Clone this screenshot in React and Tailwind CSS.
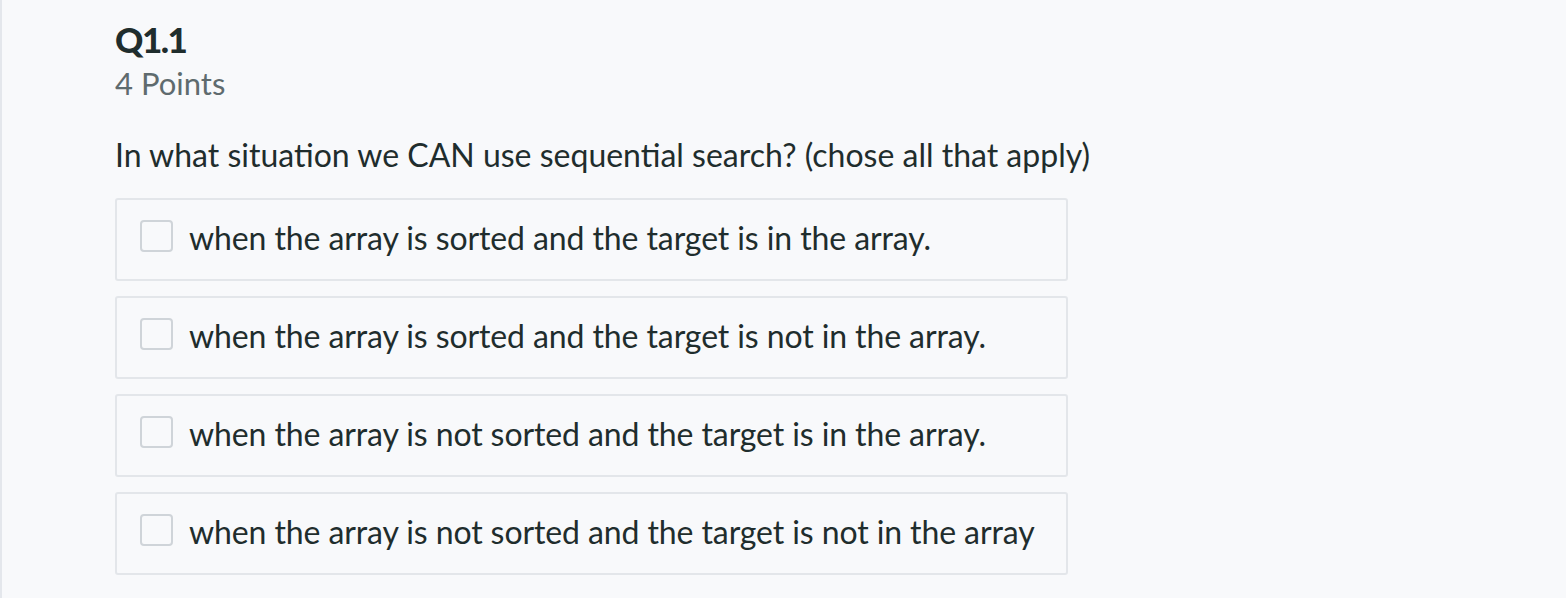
export default function App() {
  const options = [
    "when the array is sorted and the target is in the array.",
    "when the array is sorted and the target is not in the array.",
    "when the array is not sorted and the target is in the array.",
    "when the array is not sorted and the target is not in the array",
  ];
  return (
    <div className="w-[1566px] h-[598px] overflow-hidden bg-[#f8f9fb] border-l-2 border-[#e4e7ec]" style={{ fontFamily: "Lato, 'Open Sans', sans-serif" }}>
      <div className="pl-[113px] pt-[19px]">
        <div className="text-[35px] leading-[40px] font-black text-[#1f2d2d] tracking-[-1.5px]">Q1.1</div>
        <div className="text-[31px] leading-[36px] text-[#5f6b6e] mt-[6px]">4 Points</div>
        <div className="text-[32px] leading-[40px] text-[#1f2d2d] mt-[34px]">In what situation we CAN use sequential search? (chose all that apply)</div>
        <div className="flex flex-col gap-[15px] mt-[23px] w-[953px]">
          {options.map((o) => (
            <div key={o} className="h-[83px] border-2 border-[#e3e6ea] rounded-[3px] flex items-center pl-[23px] pb-[4px]">
              <div className="w-[33px] h-[32px] border-2 border-[#cfd4d9] rounded-[4px] bg-[#f8f9fb] shrink-0 mb-[4px]" />
              <div className="ml-[16px] text-[32px] leading-[40px] text-[#1f2d2d] tracking-[-0.1px]">{o}</div>
            </div>
          ))}
        </div>
      </div>
    </div>
  );
}
